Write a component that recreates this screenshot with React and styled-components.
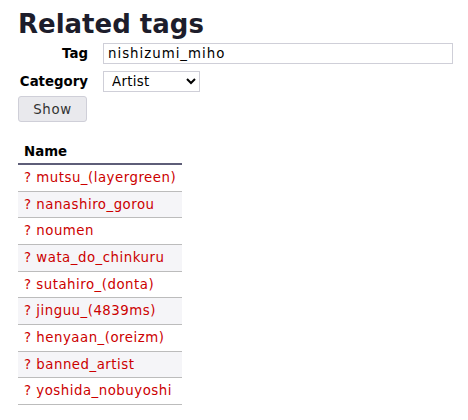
import React from 'react'
import styled, { createGlobalStyle } from 'styled-components'

const GlobalStyle = createGlobalStyle`
  body {
    margin: 0;
    background: #fff;
    font-family: "DejaVu Sans", Verdana, sans-serif;
    font-size: 13.33px;
    color: #000;
  }
`;

const Page = styled.div`
  padding: 8px 18px;
`;

const Title = styled.h1`
  margin: 0 0 3px;
  font-size: 26px;
  font-weight: bold;
  line-height: 32px;
  color: #1d1d2b;
`;

const Form = styled.form`
  display: flex;
  flex-direction: column;
  align-items: flex-start;
  margin-bottom: 18px;
`;

const Field = styled.div`
  display: grid;
  grid-template-columns: 70px auto;
  column-gap: 15px;
  align-items: center;
  margin-bottom: ${p => p.$gap || 0}px;
`;

const Label = styled.label`
  font-weight: bold;
  text-align: right;
  white-space: nowrap;
`;

const TextInput = styled.input`
  width: 350px;
  height: 21px;
  box-sizing: border-box;
  border: 1px solid #cfcfd8;
  padding: 0 4px;
  font: inherit;
  letter-spacing: 1px;
  color: #000;
  outline: none;
`;

const Select = styled.select`
  width: 97px;
  height: 21px;
  box-sizing: border-box;
  border: 1px solid #cfcfd8;
  border-radius: 0;
  background: #fff;
  font: inherit;
  letter-spacing: 0.3px;
  padding: 0 4px;
  color: #000;
`;

const Button = styled.button`
  width: 69px;
  height: 26px;
  background: #e9e9ed;
  border: 1px solid #cfcfd8;
  border-radius: 3px;
  font: inherit;
  letter-spacing: 0.6px;
  color: #333;
`;

const Table = styled.table`
  width: 164px;
  border-collapse: collapse;
`;

const Head = styled.th`
  text-align: left;
  font-weight: bold;
  padding: 4px 6px;
  border-bottom: 2px solid #5e5e78;
`;

const Row = styled.tr`
  background: ${p => (p.$shaded ? '#f5f5f8' : '#fff')};
`;

const Cell = styled.td`
  padding: 5px 6px;
  line-height: 15.67px;
  border-bottom: 1px solid #bcbcbc;
  white-space: nowrap;
  letter-spacing: 0.5px;
  color: #c00;
`;

const tags = [
  'mutsu_(layergreen)',
  'nanashiro_gorou',
  'noumen',
  'wata_do_chinkuru',
  'sutahiro_(donta)',
  'jinguu_(4839ms)',
  'henyaan_(oreizm)',
  'banned_artist',
  'yoshida_nobuyoshi',
];

export default function App() {
  return (
    <Page>
      <GlobalStyle />
      <Title>Related tags</Title>
      <Form onSubmit={e => e.preventDefault()}>
        <Field $gap={7}>
          <Label>Tag</Label>
          <TextInput defaultValue="nishizumi_miho" />
        </Field>
        <Field $gap={4}>
          <Label>Category</Label>
          <Select defaultValue="artist">
            <option value="artist">Artist</option>
          </Select>
        </Field>
        <Button>Show</Button>
      </Form>
      <Table>
        <thead>
          <tr>
            <Head>Name</Head>
          </tr>
        </thead>
        <tbody>
          {tags.map((t, i) => (
            <Row key={t} $shaded={i % 2 === 1}>
              <Cell>? {t}</Cell>
            </Row>
          ))}
        </tbody>
      </Table>
    </Page>
  );
}
